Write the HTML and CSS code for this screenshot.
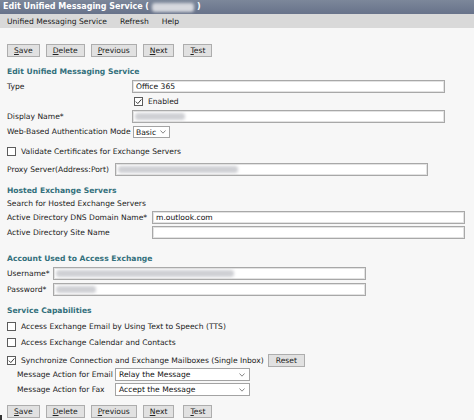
FILE: index.html
```html
<!DOCTYPE html>
<html>
<head>
<meta charset="utf-8">
<title>Edit Unified Messaging Service</title>
<link rel="stylesheet" href="styles.css">
</head>
<body>
<div class="titlebar">Edit Unified Messaging Service (<span class="blur blur-title"></span>)</div>
<div class="menubar"><span class="menu-item">Unified Messaging Service</span><span class="menu-item">Refresh</span><span class="menu-item">Help</span></div>
<div class="content">
  <div class="toolbar toolbar-top">
    <button class="btn btn-save"><u>S</u>ave</button>
    <button class="btn btn-delete"><u>D</u>elete</button>
    <button class="btn btn-prev"><u>P</u>revious</button>
    <button class="btn btn-next"><u>N</u>ext</button>
    <button class="btn btn-test"><u>T</u>est</button>
  </div>

  <h2 class="sec sec-edit">Edit Unified Messaging Service</h2>
  <div class="form form-general">
    <div class="label">Type</div><div class="input">Office 365</div>
    <div class="label"></div>
    <div class="check-row"><span class="box"><svg viewBox="0 0 9 9" width="9" height="9"><polyline points="1.8,4.6 3.8,6.6 7.4,2.4" fill="none" stroke="#3a3a3a" stroke-width="1"/></svg></span><span class="check-text">Enabled</span></div>
    <div class="label">Display Name*</div><div class="input"><span class="blur blur-display"></span></div>
    <div class="label">Web-Based Authentication Mode</div><div class="select-cell"><div class="select select-basic"><span>Basic</span><svg class="chev" viewBox="0 0 6 4" width="6" height="4"><polyline points="0.5,0.5 3,3.2 5.5,0.5" fill="none" stroke="#7a7a7a" stroke-width="0.9"/></svg></div></div>
  </div>

  <div class="check-row check-validate"><span class="box"></span><span class="check-text">Validate Certificates for Exchange Servers</span></div>

  <div class="form form-proxy">
    <div class="label">Proxy Server(Address:Port)</div><div class="input"><span class="blur blur-proxy"></span></div>
  </div>

  <h2 class="sec sec-hosted">Hosted Exchange Servers</h2>
  <div class="plain plain-search">Search for Hosted Exchange Servers</div>
  <div class="form form-hosted">
    <div class="label">Active Directory DNS Domain Name*</div><div class="input">m.outlook.com</div>
    <div class="label">Active Directory Site Name</div><div class="input"></div>
  </div>

  <h2 class="sec sec-account">Account Used to Access Exchange</h2>
  <div class="form form-account">
    <div class="label">Username*</div><div class="input"><span class="blur blur-user"></span></div>
    <div class="label">Password*</div><div class="input"><span class="blur blur-pass"></span></div>
  </div>

  <h2 class="sec sec-service">Service Capabilities</h2>
  <div class="check-row check-tts"><span class="box"></span><span class="check-text">Access Exchange Email by Using Text to Speech (TTS)</span></div>
  <div class="check-row check-cal"><span class="box"></span><span class="check-text">Access Exchange Calendar and Contacts</span></div>
  <div class="check-row check-sync"><span class="box"><svg viewBox="0 0 9 9" width="9" height="9"><polyline points="1.8,4.6 3.8,6.6 7.4,2.4" fill="none" stroke="#3a3a3a" stroke-width="1"/></svg></span><span class="check-text">Synchronize Connection and Exchange Mailboxes (Single Inbox)</span><button class="btn btn-reset">Reset</button></div>

  <div class="form form-actions">
    <div class="label">Message Action for Email</div><div class="select-cell"><div class="select select-wide"><span>Relay the Message</span><svg class="chev" viewBox="0 0 6 4" width="6" height="4"><polyline points="0.5,0.5 3,3.2 5.5,0.5" fill="none" stroke="#7a7a7a" stroke-width="0.9"/></svg></div></div>
    <div class="label">Message Action for Fax</div><div class="select-cell"><div class="select select-wide"><span>Accept the Message</span><svg class="chev" viewBox="0 0 6 4" width="6" height="4"><polyline points="0.5,0.5 3,3.2 5.5,0.5" fill="none" stroke="#7a7a7a" stroke-width="0.9"/></svg></div></div>
  </div>

  <div class="toolbar toolbar-bottom">
    <button class="btn btn-save"><u>S</u>ave</button>
    <button class="btn btn-delete"><u>D</u>elete</button>
    <button class="btn btn-prev"><u>P</u>revious</button>
    <button class="btn btn-next"><u>N</u>ext</button>
    <button class="btn btn-test"><u>T</u>est</button>
  </div>
</div>
<div class="corner-mark"></div>
</body>
</html>
```

FILE: styles.css
```css
html, body {
  height: 100%;
}
body {
  margin: 0;
  background: #f7f7f7;
  font-family: "DejaVu Sans", Verdana, sans-serif;
  font-size: 7.6px;
  color: #222;
  overflow: hidden;
  position: relative;
}

.titlebar {
  height: 14px;
  line-height: 14px;
  background: linear-gradient(#7c879a, #67728a);
  color: #fff;
  font-weight: bold;
  font-size: 8px;
  padding-left: 3px;
  white-space: nowrap;
  display: flex;
  align-items: center;
}
.blur {
  display: inline-block;
  height: 7px;
  background: #cfd0d4;
  border-radius: 3px;
  filter: blur(1.5px);
}
.blur-title {
  width: 42px;
  height: 9px;
  background: #d6d8de;
  margin: 0 3px 0 3px;
}

.menubar {
  height: 14px;
  background: #d9d9d9;
  display: flex;
  align-items: center;
  padding-left: 7px;
  color: #1a1a1a;
}
.menu-item {
  margin-right: 13px;
}

.content {
  padding: 0 7px;
}

.toolbar {
  display: flex;
  height: 13px;
}
.toolbar-top {
  margin-top: 16px;
}
.toolbar-bottom {
  margin-top: 9px;
}
.btn {
  font-family: inherit;
  font-size: 7.6px;
  color: #222;
  background: #e1e1e1;
  border: 1px solid #adadad;
  height: 13px;
  padding: 0 6px;
  margin: 0 6px 0 0;
  line-height: 11px;
  border-radius: 0;
}
.btn u {
  text-decoration: underline;
}
.btn-test {
  margin-left: 3px;
}

.sec {
  margin: 0;
  font-size: 7.6px;
  font-weight: bold;
  color: #33707c;
  height: 10px;
  line-height: 10px;
}
.sec-edit { margin-top: 10px; }
.sec-hosted { margin-top: 10px; }
.sec-account { margin-top: 15px; }
.sec-service { margin-top: 10px; }

.form {
  display: grid;
  align-items: center;
  row-gap: 3px;
}
.form-general {
  grid-template-columns: 125px auto;
  margin-top: 3px;
}
.form-proxy {
  grid-template-columns: 108px auto;
  margin-top: 6px;
}
.form-hosted {
  grid-template-columns: 145px auto;
  margin-top: 2px;
  row-gap: 2px;
}
.form-account {
  grid-template-columns: 46px auto;
  margin-top: 3px;
}
.form-actions {
  grid-template-columns: 98px auto;
  margin-left: 10px;
  margin-top: 2px;
  row-gap: 2px;
}
.label {
  white-space: nowrap;
  line-height: 10px;
}
.input {
  width: 313px;
  height: 13px;
  box-sizing: border-box;
  background: #fff;
  border: 1px solid #a8a8a8;
  box-shadow: inset 0 0 0 1px #e3e3e3;
  padding-left: 3px;
  line-height: 11px;
  display: flex;
  align-items: center;
  color: #111;
}
.input .blur {
  margin-left: -1px;
}
.blur-display { width: 50px; }
.blur-proxy { width: 120px; }
.blur-user { width: 178px; }
.blur-pass { width: 40px; }

.select-cell {
  display: flex;
}
.select {
  height: 12px;
  box-sizing: border-box;
  background: #fff;
  border: 1px solid #a3a3a3;
  display: flex;
  align-items: center;
  justify-content: space-between;
  padding: 0 4px 0 3px;
  color: #111;
}
.select-basic {
  width: 37px;
  margin-left: 1px;
  padding: 0 3px 0 2px;
}
.select-wide {
  width: 135px;
  height: 13px;
}
.chev {
  display: block;
}

.check-row {
  display: flex;
  align-items: center;
  height: 11px;
}
.box {
  width: 9px;
  height: 9px;
  box-sizing: border-box;
  border: 1px solid #5c5c5c;
  background: #fff;
  position: relative;
  flex: none;
}
.box svg {
  position: absolute;
  left: -1px;
  top: -1px;
}
.check-text {
  margin-left: 5px;
  white-space: nowrap;
}
.form-general .check-row .box {
  margin-left: 2px;
}
.check-validate {
  margin-top: 8px;
}
.check-tts { margin-top: 5px; }
.check-cal { margin-top: 5px; }
.check-sync { margin-top: 7px; }
.btn-reset {
  margin-left: 4px;
  padding: 0 7px;
}

.plain {
  line-height: 10px;
}
.plain-search {
  margin-top: 3px;
}

.corner-mark {
  position: absolute;
  left: 0;
  bottom: 0;
  width: 2px;
  height: 5px;
  background: #333;
}
```
